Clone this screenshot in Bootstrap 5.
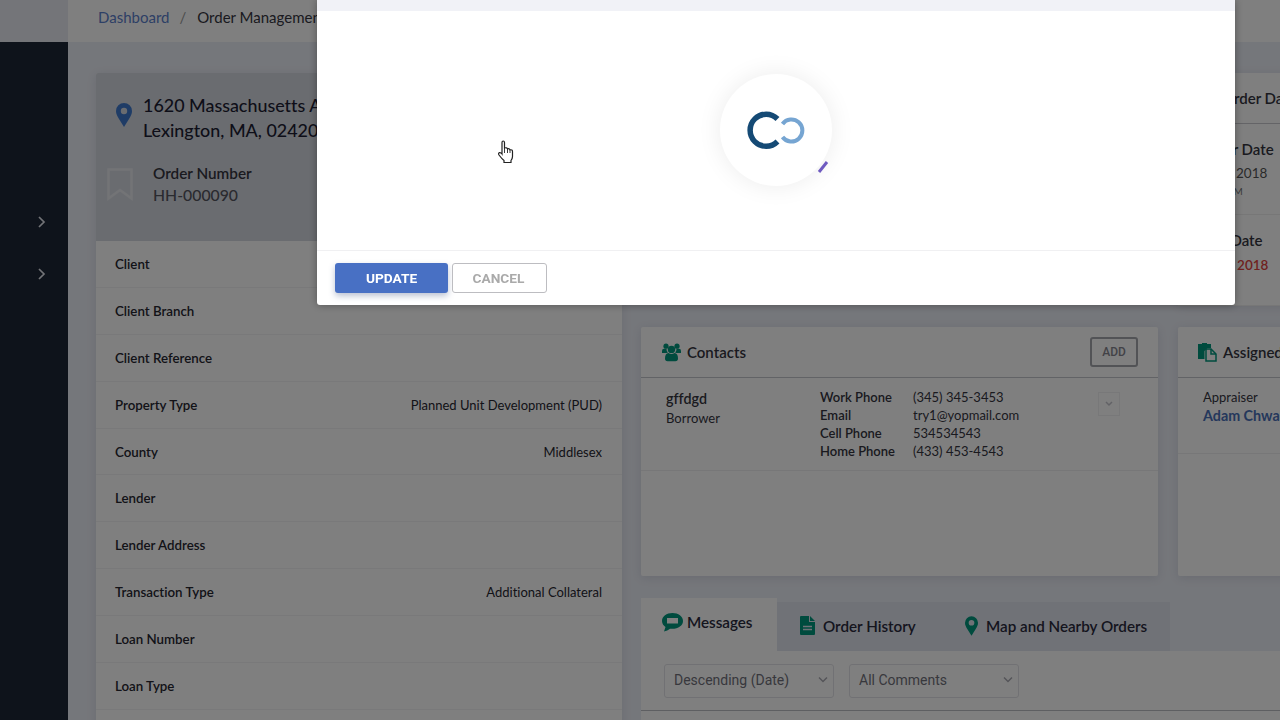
<!DOCTYPE html>
<html lang="en">
<head>
<meta charset="utf-8">
<meta name="viewport" content="width=device-width, initial-scale=1">
<title>Order Management</title>
<link href="https://cdn.jsdelivr.net/npm/bootstrap@5.3.0/dist/css/bootstrap.min.css" rel="stylesheet">
<style>
body{font-family:Lato,"Liberation Sans",sans-serif;font-size:13px;line-height:18px;color:#35353f;background:#ebeef6;height:720px;overflow:hidden;font-variant-ligatures:none}
.side{width:68px;background:#1c2636}
.side-top{height:42px;background:#e8ebf2}
.side-nav{padding-top:171px;color:#e4e7ee}
.side-nav a{display:flex;justify-content:flex-end;height:52px;padding:2px 21px 0 0;color:inherit}
.crumbs{height:42px;font-size:15px;line-height:20px;padding:7px 0 0 30px;background:#fff}
.crumbs a{color:#5b80cc;text-decoration:none}
.crumbs .sep{color:#999;padding:0 11px 0 10px}
.work{height:678px}
.panel{background:#fff;border-radius:2px;box-shadow:0 2px 10px rgba(70,80,110,.14)}
.order{width:526px;margin:31px 0 0 28px;height:660px}
.order-head{height:168px;background:#d5d9e1;border-radius:2px 2px 0 0;padding:20px 0 0 20px}
.pin{margin:10px 11px 0 0}
.order-id{margin:20px 0 0 -9px}
.flag{margin:5px 20px 0 0}
.addr{font-size:17.900px;line-height:25px;color:#1d1d33;white-space:nowrap}
.num{font-size:15px;line-height:22px;margin-top:-1px}
.num div:first-child{font-size:15.300px}
.num div+div{color:#55555f;font-size:15.800px}
.info{height:46.9px;padding:0 20px 0 19px;border-bottom:1px solid #f3f3f5;color:#262630}
.info .b6{font-size:13.300px}
.b5{font-weight:500}.b6{font-weight:600}.b7{font-weight:700}
.cols{margin:31px 0 0 19px;width:740px}
.dates{height:232px;width:200px;margin-left:537px}
.dates .ttl{height:51px;border-bottom:1px solid #c9c9ce;padding:16px 0 0 44px;font-size:15px;white-space:nowrap}
.dt{padding:16px 0 0 21px;height:91px;border-bottom:1px solid #eee;white-space:nowrap}
.dt .nm{font-size:15px}
.dt .vl{font-size:13.500px;margin:6px 0 0 3px;color:#555}
.dt .due{color:#e0443e;margin:7px 0 0 4px}
.dt .tm{font-size:10px;color:#777;padding-left:6px}
.contacts{width:517px;height:249px;margin-top:22px}
.assigned{width:200px;height:249px;margin:22px 0 0 20px}
.assigned .hd{padding-left:20px}
.assigned .contact{padding-left:25px;height:76px}
.assignee{color:#4a70b8;font-size:14.3px;line-height:20px}
.hd{height:51px;border-bottom:1px solid #c4c6cc;padding:0 20px 0 21px;font-size:15px;white-space:nowrap}
.hd svg{margin-right:6px}
.add{width:48px;height:30px;border:2px solid #a4a6ac;border-radius:3px;font:500 12px Roboto,sans-serif;color:#85858f;background:none;padding:0}
.contact{padding:10px 0 0 25px;height:93px;border-bottom:1px solid #eeeef0}
.contact .who{width:154px;padding-top:1px}
.who .b6{font-size:14.300px;line-height:20px}
.contact .lab{width:93px}
.vals{width:185px;font-size:13px}
.mini{width:22px;height:24px;border:1px solid #f0f0f3;color:#c4c4cc;margin-top:4px}
.tabs{margin-top:22px;height:53px;width:800px}
.tabs>a{color:#2a2a3c;text-decoration:none;font-size:15.200px}
.tabs .on{width:136px;background:#fff;padding:0 0 5px 21px}
.tabs .off{background:#e1e5ef;margin-top:4px;padding:0 0 2px 24px}
.tabs .hist{width:164px;padding-left:23px}
.tabs .map{width:229px}
.msgs{background:#fff;width:800px;height:70px}
.filters{height:60px;padding:13px 0 0 23px;border-bottom:1px solid #bcbec4}
.sel{width:170px;height:34px;margin-right:15px;border:1px solid #e2e3e8;border-radius:3px;font:14px Roboto,sans-serif;color:#71717b;padding:0 5px 3px 9px}
.shade{position:fixed;inset:0;background:rgba(0,0,0,.5)}
.dialog-layer{position:fixed;inset:0;padding-left:317px}
.dialog-box{width:918px;height:305px;background:#fff;border-radius:0 0 3px 3px;box-shadow:0 0 8px rgba(0,0,0,.35)}
.dialog-top{height:11px;background:#f1f2f7}
.dialog-main{height:239px}
.loader{width:112px;height:112px;border-radius:50%;box-shadow:0 0 24px rgba(0,0,0,.08);margin-top:-1px}
.dialog-foot{height:55px;border-top:1px solid #f0f0f2;padding:12px 0 0 18px}
.dialog-foot button{height:30px;border-radius:3px;font:700 13.700px/28px Roboto,sans-serif;padding:0 0 1px}
.go{width:113px;border:0;background:#4870c4;color:#fff;box-shadow:0 3px 6px rgba(60,80,130,.35)}
.no{width:95px;border:1px solid #bdbdc1!important;background:#fff;color:#aaa;margin-left:4px;padding-right:2px!important;line-height:26px!important}
.go{line-height:26px!important}
.pointer{position:fixed;left:496px;top:139px}
</style>
</head>
<body>
<div class="d-flex vh-100">
 <aside class="side flex-shrink-0">
  <div class="side-top"></div>
  <nav class="side-nav">
   <a><svg width="10" height="14" viewBox="0 0 10 14" fill="none" stroke="currentColor" stroke-width="1.7"><path d="M2 2l5 5-5 5"/></svg></a>
   <a><svg width="10" height="14" viewBox="0 0 10 14" fill="none" stroke="currentColor" stroke-width="1.7"><path d="M2 2l5 5-5 5"/></svg></a>
  </nav>
 </aside>
 <main class="flex-grow-1 overflow-hidden">
  <div class="crumbs"><a href="#">Dashboard</a><span class="sep">/</span>Order Management</div>
  <div class="work d-flex">
   <section class="order panel flex-shrink-0">
    <div class="order-head">
     <div class="d-flex">
      <svg class="pin flex-shrink-0" width="16" height="24" viewBox="0 0 16 24"><path fill="#3f79cd" fill-rule="evenodd" d="M8 0a8 8 0 0 0-8 8c0 3 1 4.500 3 8l5 8 5-8c2-3.500 3-5 3-8a8 8 0 0 0-8-8zm0 4.800a3.200 3.200 0 1 1 0 6.400 3.200 3.200 0 0 1 0-6.400z"/></svg>
      <div class="addr b5">1620 Massachusetts Avenue<br>Lexington, MA, 02420</div>
     </div>
     <div class="order-id d-flex">
      <svg class="flag" width="26" height="34" viewBox="0 0 26 34" fill="none" stroke="#e6e8ed" stroke-width="2.500"><path d="M1.500 1.500h23v29L13 22 1.500 30.500z"/></svg>
      <div class="num"><div class="b6">Order Number</div><div class="b5">HH-000090</div></div>
     </div>
    </div>
    <div class="info d-flex align-items-center justify-content-between"><span class="b6">Client</span></div>
    <div class="info d-flex align-items-center justify-content-between"><span class="b6">Client Branch</span></div>
    <div class="info d-flex align-items-center justify-content-between"><span class="b6">Client Reference</span></div>
    <div class="info d-flex align-items-center justify-content-between"><span class="b6">Property Type</span><span>Planned Unit Development (PUD)</span></div>
    <div class="info d-flex align-items-center justify-content-between"><span class="b6">County</span><span>Middlesex</span></div>
    <div class="info d-flex align-items-center justify-content-between"><span class="b6">Lender</span></div>
    <div class="info d-flex align-items-center justify-content-between"><span class="b6">Lender Address</span></div>
    <div class="info d-flex align-items-center justify-content-between"><span class="b6">Transaction Type</span><span>Additional Collateral</span></div>
    <div class="info d-flex align-items-center justify-content-between"><span class="b6">Loan Number</span></div>
    <div class="info d-flex align-items-center justify-content-between"><span class="b6">Loan Type</span></div>
   </section>
   <div class="cols flex-shrink-0">
    <section class="dates panel">
     <div class="ttl b6">Order Dates</div>
     <div class="dt"><div class="nm b6">Order Date</div><div class="vl">Jul 5, 2018</div><div class="tm">3:12 PM</div></div>
     <div class="dt"><div class="nm b6">Due Date</div><div class="vl due b6">Jul 6, 2018</div></div>
    </section>
    <div class="d-flex">
     <section class="contacts panel">
      <div class="hd b6 d-flex align-items-center">
       <svg width="19" height="19" viewBox="0 0 19 19" fill="#00967d"><circle cx="4" cy="3.200" r="2.600"/><circle cx="15" cy="3.200" r="2.600"/><path d="M0 10V8q0-2.200 2-2.200h2.500Q4.300 8 6 9.500L4.500 10zM19 10V8q0-2.200-2-2.200h-2.500q.2 2.200-1.500 3.700l1.500.5z"/><circle cx="9.500" cy="6.400" r="3.700"/><path d="M3 15.500q0-5 3.500-5.400 3 1.800 6 0 3.500.4 3.500 5.400 0 2.800-2.600 2.800H5.600Q3 18.300 3 15.500z"/></svg>
       <span class="me-auto">Contacts</span><button class="add">ADD</button>
      </div>
      <div class="contact d-flex">
       <div class="who"><div class="b6">gffdgd</div>Borrower</div>
       <div class="lab b6">Work Phone<br>Email<br>Cell Phone<br>Home Phone</div>
       <div class="vals">(345) 345-3453<br>try1@yopmail.com<br>534534543<br>(433) 453-4543</div>
       <div class="mini d-flex align-items-center justify-content-center"><svg width="8" height="6" fill="none" stroke="currentColor" stroke-width="1.500"><path d="M1 1l3 3 3-3"/></svg></div>
      </div>
     </section>
     <section class="assigned panel">
      <div class="hd b6 d-flex align-items-center">
       <svg width="19" height="19" viewBox="0 0 19 19"><path fill="#00967d" d="M0 1h4V0h5v1h4v4H9.500L6.500 8v8H0z"/><path fill="#fff" stroke="#00967d" stroke-width="1.500" d="M8 6h5l5 5v7H8z"/><path d="M13 6v5h5" fill="none" stroke="#00967d" stroke-width="1.500"/></svg>Assigned To</div>
      <div class="contact">Appraiser<div class="assignee b7 text-nowrap">Adam Chwalek</div></div>
     </section>
    </div>
    <div class="tabs d-flex">
     <a class="on b6 d-flex align-items-center" href="#"><svg class="me-1" width="21" height="19" viewBox="0 0 21 19"><path fill="#00967d" fill-rule="evenodd" d="M10.500 0C4.500 0 0 3.500 0 8c0 2.500 1.400 4.500 3.500 6L2 18.500q3.500-.7 6-2.800c7.500.8 13-2.700 13-7.700 0-4.500-4.700-8-10.500-8zM5 5h11v5.500H5z"/></svg>Messages</a>
     <a class="off hist b6 d-flex align-items-center" href="#"><svg class="me-2" width="15" height="19" viewBox="0 0 15 19"><path fill="#00967d" d="M1 0h8v6h6v12q0 1-1 1H1q-1 0-1-1V1q0-1 1-1zm9 0l5 5h-5z"/><path d="M3 10.500h9M3 13.500h9" stroke="#dfe3ee" stroke-width="1.300"/></svg>Order History</a>
     <a class="off map b6 d-flex align-items-center" href="#"><svg class="me-2" width="13" height="20" viewBox="0 0 16 24"><path fill="#00967d" fill-rule="evenodd" d="M8 0a8 8 0 0 0-8 8c0 3 1 4.500 3 8l5 8 5-8c2-3.500 3-5 3-8a8 8 0 0 0-8-8zm0 4.500a3.500 3.500 0 1 1 0 7 3.500 3.500 0 0 1 0-7z"/></svg>Map and Nearby Orders</a>
    </div>
    <div class="msgs"><div class="filters d-flex">
     <div class="sel d-flex align-items-center justify-content-between">Descending (Date)<svg width="10" height="7" fill="none" stroke="#aaaab2" stroke-width="1.500"><path d="M1 1.500l4 4 4-4"/></svg></div>
     <div class="sel d-flex align-items-center justify-content-between">All Comments<svg width="10" height="7" fill="none" stroke="#aaaab2" stroke-width="1.500"><path d="M1 1.500l4 4 4-4"/></svg></div>
    </div></div>
   </div>
  </div>
 </main>
</div>
<div class="shade"></div>
<div class="dialog-layer">
 <div class="dialog-box">
  <div class="dialog-top"></div>
  <div class="dialog-main d-flex align-items-center justify-content-center">
   <div class="loader"><svg width="112" height="112" fill="none"><path d="M57.500 45A16 16 0 1 0 57.500 67.500" stroke="#154a75" stroke-width="5.500"/><path d="M62.500 50A11 11 0 1 1 62.500 63" stroke="#76a5d2" stroke-width="4"/><path d="M99 98l8-10" stroke="#6e5ac0" stroke-width="3"/></svg></div>
  </div>
  <div class="dialog-foot d-flex"><button class="go">UPDATE</button><button class="no">CANCEL</button></div>
 </div>
</div>
<svg class="pointer" width="19" height="25" viewBox="0 0 19 25"><path d="M6 13V3.500Q6 2 7.200 2t1.300 1.500V9q2.500-.8 3 .8 2-.5 2.500 1 2.500-.3 2.500 1.700v5q0 2-1.500 4v2H8v-2Q6 20 3 16q-1-2 .5-2.300Q5 13.500 6 15z" fill="#fff" stroke="#222" stroke-width="1.200"/><path d="M8.500 9v5M11.500 10v4M14 11v3" stroke="#222" stroke-width=".9"/></svg>
<script src="https://cdn.jsdelivr.net/npm/bootstrap@5.3.0/dist/js/bootstrap.bundle.min.js"></script>
</body>
</html>
